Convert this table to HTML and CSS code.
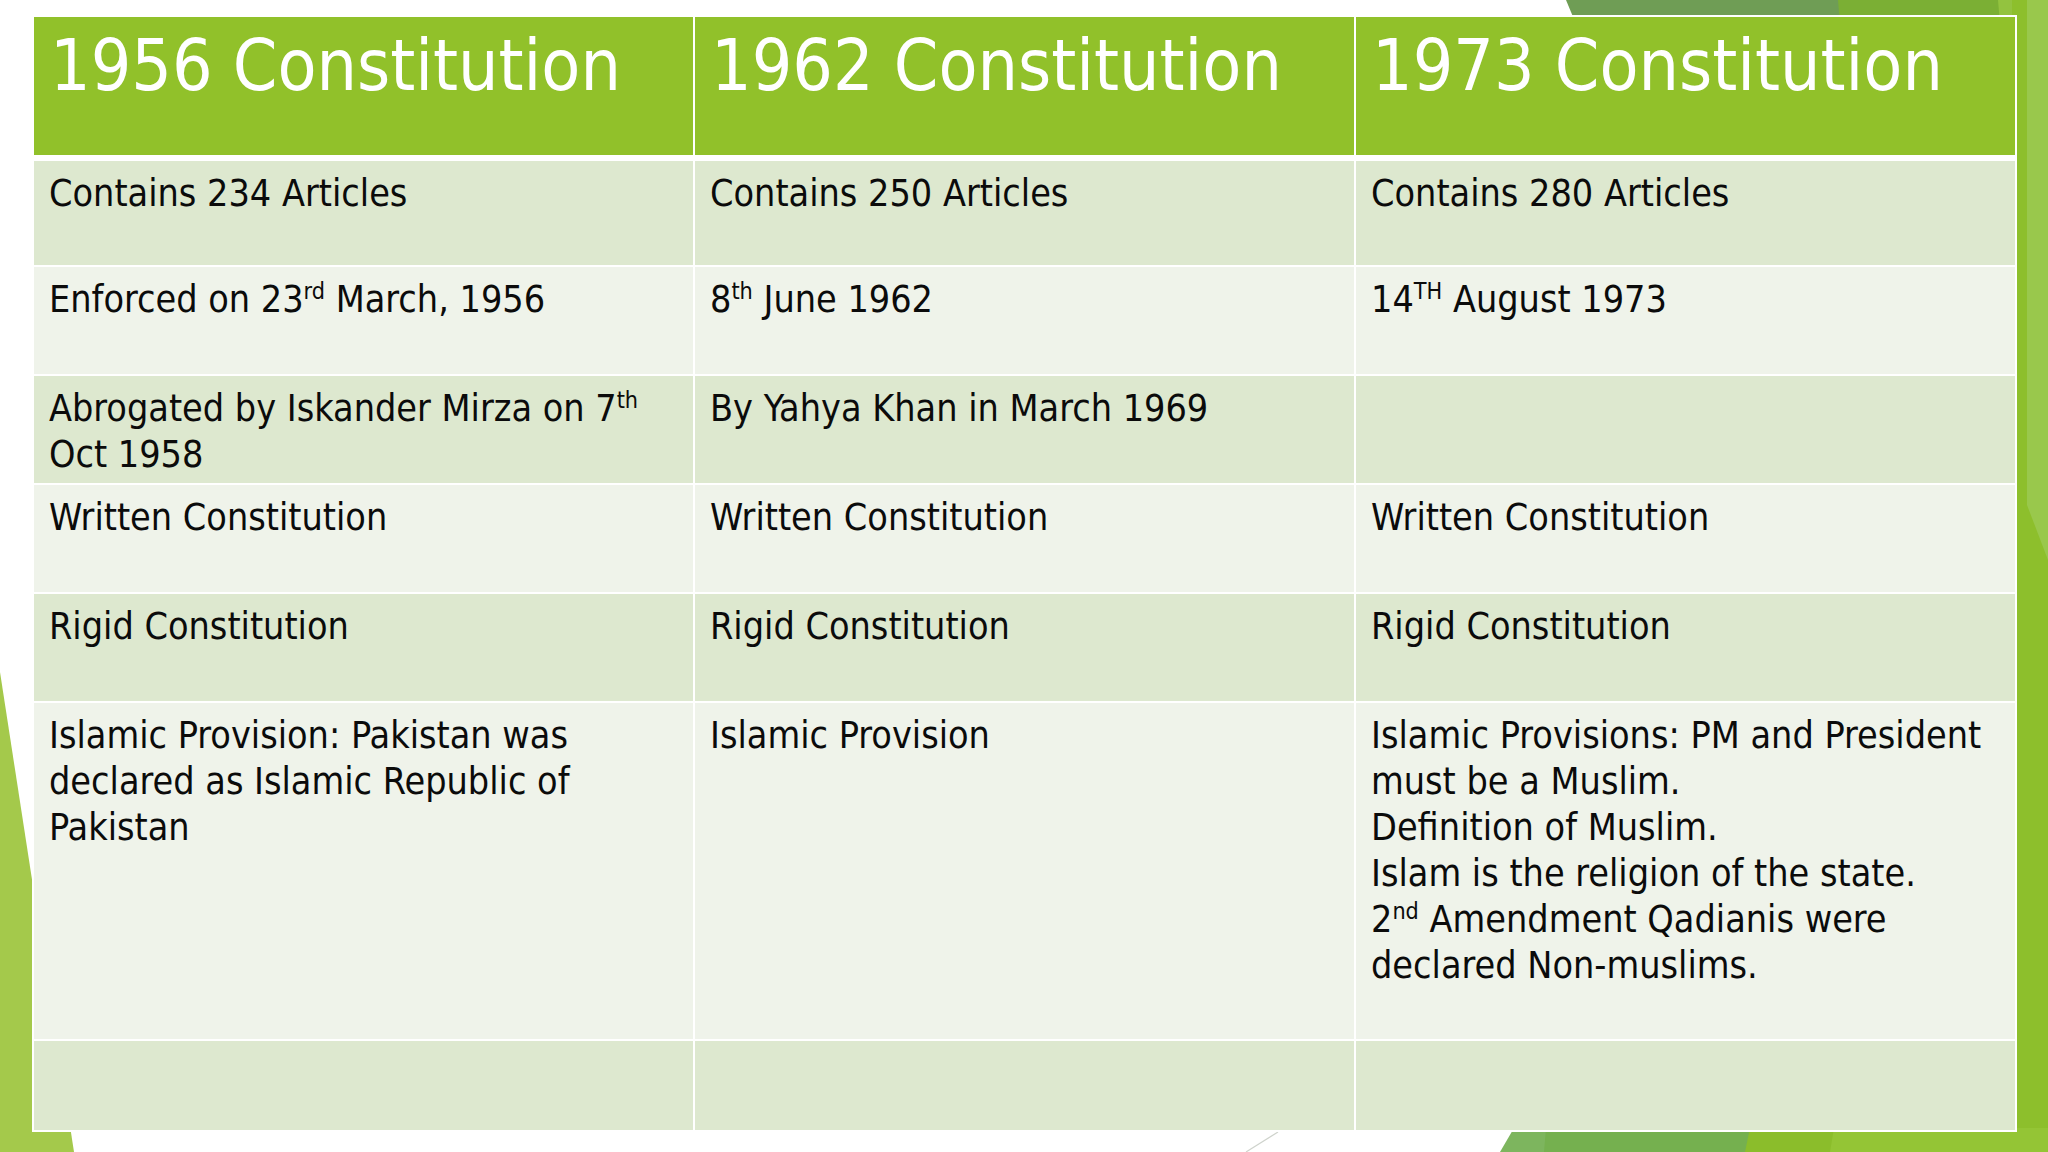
FILE: index.html
```html
<!DOCTYPE html>
<html lang="en">
<head>
<meta charset="utf-8">
<title>Constitutions of Pakistan</title>
<link rel="stylesheet" href="styles.css">
</head>
<body>
<div class="slide">
  <svg class="deco" width="2048" height="1152" viewBox="0 0 2048 1152" aria-hidden="true">
    <polygon points="0,672 74,1152 0,1152" fill="#A4C94B"/>
    <polygon points="1566,0 2048,0 2048,24 1576,24" fill="#6F9D55"/>
    <polygon points="1838,0 2048,0 2048,24 1840,24" fill="#7BAF34"/>
    <polygon points="1998,0 2048,0 2048,24 2000,24" fill="#93C33F"/>
    <rect x="2012" y="0" width="36" height="1152" fill="#8DBF2C"/>
    <polygon points="2027,0 2048,0 2048,560 2027,505" fill="#99C84C"/>
    <polygon points="1514,1128 2048,1128 2048,1152 1500,1152" fill="#7DB55E"/>
    <polygon points="1546,1128 2048,1128 2048,1152 1544,1152" fill="#75B04F"/>
    <polygon points="1750,1128 2048,1128 2048,1152 1745,1152" fill="#8BBD2B"/>
    <polygon points="1834,1128 2048,1128 2048,1152 1830,1152" fill="#94C535"/>
    <line x1="1278" y1="1132" x2="1246" y2="1152" stroke="#cfd3cc" stroke-width="1.2"/>
  </svg>

  <div class="table">
    <div class="row head">
      <div class="cell">1956 Constitution</div>
      <div class="cell">1962 Constitution</div>
      <div class="cell">1973 Constitution</div>
    </div>
    <div class="row odd">
      <div class="cell">Contains 234 Articles</div>
      <div class="cell">Contains 250 Articles</div>
      <div class="cell">Contains 280 Articles</div>
    </div>
    <div class="row even">
      <div class="cell">Enforced on 23<sup>rd</sup> March, 1956</div>
      <div class="cell">8<sup>th</sup> June 1962</div>
      <div class="cell">14<sup>TH</sup> August 1973</div>
    </div>
    <div class="row odd">
      <div class="cell">Abrogated by Iskander Mirza on 7<sup>th</sup> Oct 1958</div>
      <div class="cell">By Yahya Khan in March 1969</div>
      <div class="cell"></div>
    </div>
    <div class="row even">
      <div class="cell">Written Constitution</div>
      <div class="cell">Written Constitution</div>
      <div class="cell">Written Constitution</div>
    </div>
    <div class="row odd">
      <div class="cell">Rigid Constitution</div>
      <div class="cell">Rigid Constitution</div>
      <div class="cell">Rigid Constitution</div>
    </div>
    <div class="row even">
      <div class="cell">Islamic Provision: Pakistan was declared as Islamic Republic of Pakistan</div>
      <div class="cell">Islamic Provision</div>
      <div class="cell">
        <p>Islamic Provisions: PM and President must be a Muslim.</p>
        <p>Definition of Muslim.</p>
        <p>Islam is the religion of the state.</p>
        <p>2<sup>nd</sup> Amendment Qadianis were declared Non-muslims.</p>
      </div>
    </div>
    <div class="row odd">
      <div class="cell"></div>
      <div class="cell"></div>
      <div class="cell"></div>
    </div>
  </div>
</div>
</body>
</html>
```

FILE: styles.css
```css
* {
  box-sizing: border-box;
}

html, body {
  margin: 0;
  padding: 0;
  background: #ffffff;
}

.slide {
  position: relative;
  width: 2048px;
  height: 1152px;
  overflow: hidden;
  background: #ffffff;
  padding: 15px 0 0 32px;
  font-family: "DejaVu Sans Condensed", "DejaVu Sans", sans-serif;
  font-stretch: semi-condensed;
  color: #0b0b0b;
}

.deco {
  position: absolute;
  left: 0;
  top: 0;
  z-index: 0;
}

.table {
  position: relative;
  z-index: 1;
  display: grid;
  grid-template-columns: repeat(3, 659px);
  grid-template-rows: 142px 104px 107px 107px 107px 107px 336px 89px;
  gap: 2px;
  padding: 2px;
  width: max-content;
  background: #ffffff;
}

.row {
  display: contents;
}

.cell {
  padding: 9px 12px 0 15px;
  font-size: 37.4px;
  line-height: 46px;
  overflow: hidden;
}

.cell p {
  margin: 0;
}

.head > .cell {
  background: #91C12A;
  color: #ffffff;
  font-size: 71px;
  line-height: 82px;
  padding-top: 8px;
  padding-left: 16px;
  border-bottom: 4px solid #ffffff;
}

.odd > .cell {
  background: #DDE8CF;
}

.even > .cell {
  background: #EFF3EA;
}

sup {
  font-size: 62%;
  line-height: 0;
  vertical-align: 0;
  position: relative;
  top: -0.58em;
}
```
